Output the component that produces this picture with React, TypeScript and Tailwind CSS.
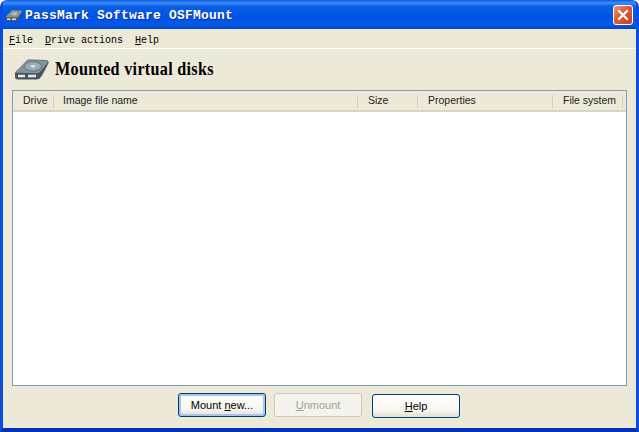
function DiskIcon({ className }: { className: string }) {
  return (
    <svg viewBox="0 0 36 22" preserveAspectRatio="none" className={className}>
      <path d="M1 14 L12 3 Q13 1.5 15 1.5 L32 2 Q35 2.5 34.5 5 L27 18 Q26 20.5 23 20.5 L4 20.5 Q1 20.5 1 18 Z" fill="#4a555b" />
      <path d="M2 12.5 L12.5 3 Q13.5 2 15 2 L32 2.5 Q34.5 3 33 5.5 L26 13.5 Q25 14.5 23 14.5 L3.5 14 Q1 14 2 12.5 Z" fill="#84929a" />
      <ellipse cx="19" cy="8" rx="8.5" ry="4.5" fill="#9dabb1" stroke="#5f6d74" strokeWidth="0.8" />
      <ellipse cx="19" cy="8" rx="2.5" ry="1.3" fill="#dfe5e7" />
      <path d="M4 16 H11 V18.5 H4 Z" fill="#e4e8ea" />
      <path d="M14 16 H22 V18.5 H14 Z" fill="#e4e8ea" />
      <path d="M28 17 L33 8 L34 6 L27 18 Z" fill="#2f383d" />
    </svg>
  );
}

const columns = [
  { label: "Drive", width: "w-[41px]", pad: "pl-[10px]" },
  { label: "Image file name", width: "w-[304px]", pad: "pl-[9px]" },
  { label: "Size", width: "w-[60px]", pad: "pl-[10px]" },
  { label: "Properties", width: "w-[135px]", pad: "pl-[10px]" },
  { label: "File system", width: "w-[70px]", pad: "pl-[10px]" },
];

function XpButton({ children, primary, disabled }: { children: React.ReactNode; primary?: boolean; disabled?: boolean }) {
  if (disabled) {
    return (
      <button className="w-[88px] h-[24px] rounded-[3px] border border-[#c9c7ba] bg-[#f4f3ee] text-[11px] text-[#a1a192]">
        {children}
      </button>
    );
  }
  return (
    <button
      className={`w-[88px] h-[24px] rounded-[3px] border border-[#003c74] bg-[linear-gradient(180deg,#ffffff_0%,#f6f5ef_70%,#e3e0d4_100%)] text-[11px] text-black ${
        primary ? "shadow-[inset_0_0_0_2px_#a9c4ea]" : ""
      }`}
    >
      {children}
    </button>
  );
}

export default function App() {
  return (
    <div className="w-[639px] h-[432px] flex flex-col overflow-hidden rounded-t-[7px] bg-[#ece9d8] font-['Liberation_Sans',sans-serif] border-x-[3px] border-b-[4px] border-x-[#0a4fdc] border-b-[#0331b8]">
      <div className="h-[29px] shrink-0 -mx-[3px] flex items-center pl-[5px] pr-[6px] bg-[linear-gradient(180deg,#0a5ce0_0%,#3d8df5_10%,#0a5fe6_22%,#0054e3_55%,#0558e8_85%,#0346c6_100%)]">
        <DiskIcon className="w-[18px] h-[13px] mr-[2px] mt-[1px]" />
        <span className="pt-[2px] font-['Liberation_Mono',monospace] font-bold text-[13px] tracking-[0.2px] text-white [text-shadow:1px_1px_0_#0a2f9a] whitespace-nowrap">
          PassMark Software OSFMount
        </span>
        <div className="ml-auto w-[20px] h-[20px] rounded-[3px] border border-white bg-[linear-gradient(135deg,#ea9a80_0%,#dc5a36_45%,#c8411e_100%)] flex items-center justify-center">
          <svg viewBox="0 0 12 12" className="w-[12px] h-[12px]">
            <path d="M2 2 L10 10 M10 2 L2 10" stroke="white" strokeWidth="2.2" strokeLinecap="square" />
          </svg>
        </div>
      </div>

      <div className="h-[20px] shrink-0 flex items-center pt-[3px] pl-[6px] gap-[12px] border-b border-white font-['Liberation_Mono',monospace] text-[10px] text-black">
        <span><span className="underline">F</span>ile</span>
        <span><span className="underline">D</span>rive actions</span>
        <span><span className="underline">H</span>elp</span>
      </div>

      <div className="h-[41px] shrink-0 flex items-center pl-[11px] gap-[5px]">
        <DiskIcon className="w-[36px] h-[23px]" />
        <h1 className="origin-left scale-x-[0.85] font-['Liberation_Serif',serif] font-bold text-[19px] tracking-[0.35px] text-black whitespace-nowrap">
          Mounted virtual disks
        </h1>
      </div>

      <div className="mx-[9px] h-[296px] shrink-0 border border-[#7f9db9] bg-white flex flex-col">
        <div className="h-[21px] shrink-0 flex items-center pt-[1px] bg-[#ece9d8] border-b-[2px] border-[#d8d5c4] text-[10.5px] text-[#222]">
          {columns.map((col) => (
            <div key={col.label} className={`${col.width} ${col.pad} h-[13px] flex items-center border-r border-[#d4d0bf] whitespace-nowrap`}>
              {col.label}
            </div>
          ))}
        </div>
      </div>

      <div className="flex justify-start pl-[175px] pt-[7px] gap-[8px]">
        <XpButton primary>Mount <span className="underline">n</span>ew...</XpButton>
        <XpButton disabled><span className="underline">U</span>nmount</XpButton>
        <div className="ml-[2px]">
          <XpButton><span className="underline">H</span>elp</XpButton>
        </div>
      </div>
    </div>
  );
}
